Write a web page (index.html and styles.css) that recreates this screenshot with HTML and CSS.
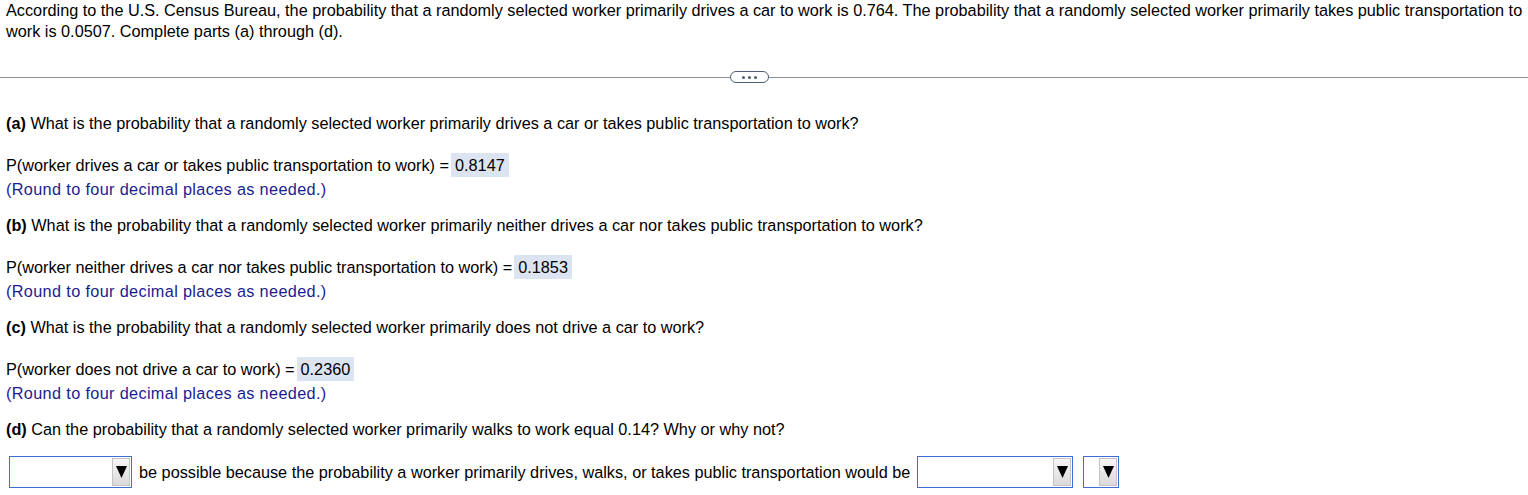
FILE: index.html
```html
<!DOCTYPE html>
<html>
<head>
<meta charset="utf-8">
<link rel="stylesheet" href="styles.css">
</head>
<body>
<div class="page">
  <p class="intro">According to the U.S. Census Bureau, the probability that a randomly selected worker primarily drives a car to work is 0.764. The probability that a randomly selected worker primarily takes public transportation to work is 0.0507. Complete parts (a) through (d).</p>
  <div class="divider">
    <span class="rule left"></span>
    <span class="pill"><i></i><i></i><i></i></span>
    <span class="rule"></span>
  </div>
  <div class="part first">
    <p class="q"><b>(a)</b> What is the probability that a randomly selected worker primarily drives a car or takes public transportation to work?</p>
    <div class="ans">P(worker drives a car or takes public transportation to work) =<span class="box">0.8147</span></div>
    <p class="note">(Round to four decimal places as needed.)</p>
  </div>
  <div class="part">
    <p class="q"><b>(b)</b> What is the probability that a randomly selected worker primarily neither drives a car nor takes public transportation to work?</p>
    <div class="ans">P(worker neither drives a car nor takes public transportation to work) =<span class="box">0.1853</span></div>
    <p class="note">(Round to four decimal places as needed.)</p>
  </div>
  <div class="part">
    <p class="q"><b>(c)</b> What is the probability that a randomly selected worker primarily does not drive a car to work?</p>
    <div class="ans">P(worker does not drive a car to work) =<span class="box">0.2360</span></div>
    <p class="note">(Round to four decimal places as needed.)</p>
  </div>
  <div class="part">
    <p class="q"><b>(d)</b> Can the probability that a randomly selected worker primarily walks to work equal 0.14? Why or why not?</p>
    <div class="row">
      <span class="sel w1"><span class="btn"><svg width="11" height="12" viewBox="0 0 11 12"><polygon points="0,0 11,0 5.5,12" fill="#000"/></svg></span></span>
      <span class="txt">be possible because the probability a worker primarily drives, walks, or takes public transportation would be</span>
      <span class="sel w2"><span class="btn"><svg width="11" height="12" viewBox="0 0 11 12"><polygon points="0,0 11,0 5.5,12" fill="#000"/></svg></span></span>
      <span class="sel w3"><span class="btn"><svg width="11" height="12" viewBox="0 0 11 12"><polygon points="0,0 11,0 5.5,12" fill="#000"/></svg></span></span>
    </div>
  </div>
</div>
</body>
</html>
```

FILE: styles.css
```css
html, body {
  margin: 0;
  padding: 0;
  background: #fff;
}
.page {
  font-family: "Liberation Sans", Arial, sans-serif;
  font-size: 16.25px;
  color: #000;
  line-height: 21px;
}
p { margin: 0; }
.intro {
  padding: 0 0 0 6px;
}
.divider {
  display: flex;
  align-items: center;
  margin-top: 29px;
  height: 12px;
}
.rule {
  flex: 1;
  height: 1px;
  background: #8a9099;
}
.rule.left {
  flex: 0 0 730px;
}
.pill {
  box-sizing: border-box;
  width: 39px;
  height: 12px;
  border: 1px solid #4d5e70;
  border-radius: 6px;
  display: flex;
  align-items: center;
  justify-content: center;
  gap: 3px;
}
.pill i {
  width: 3px;
  height: 3px;
  border-radius: 50%;
  background: #4d5e70;
  display: block;
}
.part {
  padding: 0 6px;
  margin-top: 15px;
}
.part.first {
  margin-top: 30px;
}
.q {
  margin-bottom: 19px;
}
.ans {
  height: 24px;
  line-height: 24px;
}
.box {
  display: inline-block;
  background: #dce4f1;
  padding: 0 4px;
  margin-left: 2px;
  height: 24px;
}
.note {
  color: #1c1c90;
  margin-top: 2px;
  letter-spacing: 0.35px;
}
.row {
  display: flex;
  align-items: center;
  height: 32px;
  margin-top: -3px;
}
.sel {
  box-sizing: border-box;
  height: 32px;
  border: 1px solid #3b6fd4;
  background: #fff;
  display: flex;
  align-items: center;
  justify-content: flex-end;
  padding-right: 1px;
}
.w1 { width: 123px; margin-left: 3px; }
.w2 { width: 156px; margin-left: 7px; }
.w3 { width: 36px; margin-left: 10px; }
.btn {
  box-sizing: border-box;
  width: 18px;
  height: 28px;
  border: 1px solid #c4c4c4;
  background: linear-gradient(#f7f7f7, #dadada);
  display: flex;
  align-items: center;
  justify-content: center;
}
.txt {
  margin-left: 7px;
}
```
